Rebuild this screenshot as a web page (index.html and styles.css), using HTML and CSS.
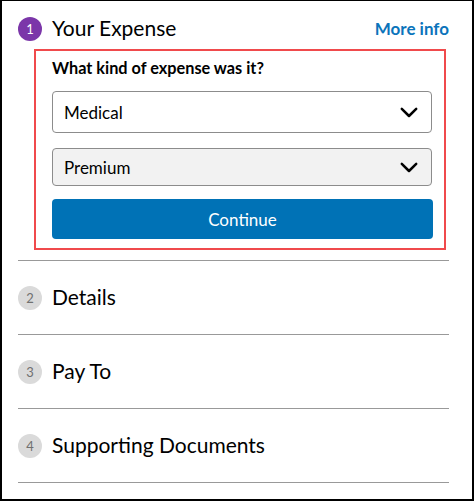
FILE: index.html
```html
<!DOCTYPE html>
<html lang="en">
<head>
<meta charset="utf-8">
<title>Claim</title>
<link rel="stylesheet" href="styles.css">
</head>
<body>
<div class="frame">
  <div class="step-head">
    <span class="badge badge-active">1</span>
    <span class="step-title">Your Expense</span>
    <a class="more-info" href="#">More info</a>
  </div>
  <div class="panel">
    <div class="question">What kind of expense was it?</div>
    <div class="select select-tall">
      <span>Medical</span>
      <svg class="chev" width="18" height="11" viewBox="0 0 18 11"><path d="M1.8 1.8 L9 9 L16.2 1.8" fill="none" stroke="#000" stroke-width="2.5" stroke-linecap="round" stroke-linejoin="round"/></svg>
    </div>
    <div class="select select-filled">
      <span>Premium</span>
      <svg class="chev" width="18" height="11" viewBox="0 0 18 11"><path d="M1.8 1.8 L9 9 L16.2 1.8" fill="none" stroke="#000" stroke-width="2.5" stroke-linecap="round" stroke-linejoin="round"/></svg>
    </div>
    <button class="btn">Continue</button>
  </div>
  <div class="steps">
    <div class="step-row"><span class="badge">2</span><span class="step-title">Details</span></div>
    <div class="step-row"><span class="badge">3</span><span class="step-title">Pay To</span></div>
    <div class="step-row"><span class="badge">4</span><span class="step-title">Supporting Documents</span></div>
  </div>
</div>
</body>
</html>
```
FILE: styles.css
```css
html, body {
  margin: 0;
  padding: 0;
  background: #fff;
}
.frame {
  box-sizing: border-box;
  width: 474px;
  height: 501px;
  border: 2px solid #000;
  border-top-width: 1px;
  padding: 0 23px 0 16px;
  font-family: Lato, "Noto Sans", sans-serif;
  color: #000;
}
.step-head {
  display: flex;
  align-items: center;
  height: 24px;
  margin-top: 16px;
}
.badge {
  flex: none;
  width: 24px;
  height: 24px;
  border-radius: 50%;
  background: #dadada;
  color: #707070;
  font-size: 13px;
  display: flex;
  align-items: center;
  justify-content: center;
  margin-right: 10px;
}
.badge-active {
  background: #7b36a9;
  color: #fff;
}
.step-title {
  font-size: 21px;
  line-height: 24px;
  margin-top: -2px;
}
.more-info {
  margin-left: auto;
  margin-top: -2px;
  color: #0b74bb;
  font-weight: bold;
  font-size: 17px;
  text-decoration: none;
}
.panel {
  box-sizing: border-box;
  margin: 8px 3px 10px 16px;
  border: 2px solid #f04a4c;
  padding: 6px 12px 9px 16px;
  display: flex;
  flex-direction: column;
}
.question {
  font-weight: bold;
  font-size: 16.3px;
  line-height: 22px;
  margin-bottom: 12px;
}
.select {
  box-sizing: border-box;
  display: flex;
  align-items: center;
  justify-content: space-between;
  border: 1px solid #8c8c8c;
  border-radius: 4px;
  padding: 0 13px 0 11px;
  font-size: 17px;
  background: #fff;
}
.select-tall {
  height: 42px;
  margin-bottom: 15px;
}
.select-filled {
  height: 38px;
  background: #f2f2f2;
  margin-bottom: 13px;
}
.btn {
  height: 40px;
  border: none;
  border-radius: 4px;
  background: #0072b6;
  color: #fff;
  font-family: inherit;
  font-size: 17px;
  margin-right: -1px;
}
.steps {
  display: flex;
  flex-direction: column;
}
.step-row {
  display: flex;
  align-items: center;
  height: 73px;
  border-top: 1px solid #999;
}
.step-row:last-child {
  border-bottom: 1px solid #999;
}
```
